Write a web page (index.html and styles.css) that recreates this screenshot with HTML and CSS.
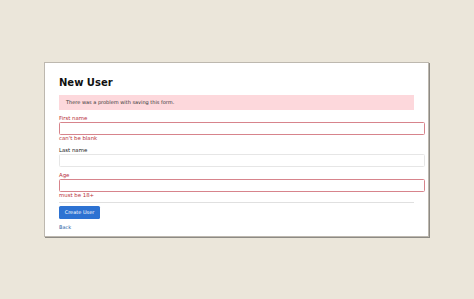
FILE: index.html
```html
<!DOCTYPE html>
<html>
<head>
<meta charset="utf-8">
<link rel="stylesheet" href="styles.css">
</head>
<body>
<div class="card">
  <h1 class="title">New User</h1>
  <div class="alert">There was a problem with saving this form.</div>
  <div class="field error">
    <label class="label">First name</label>
    <div class="input"></div>
    <div class="msg">can't be blank</div>
  </div>
  <div class="field">
    <label class="label">Last name</label>
    <div class="input"></div>
  </div>
  <div class="field error">
    <label class="label">Age</label>
    <div class="input"></div>
    <div class="msg">must be 18+</div>
  </div>
  <div class="rule"></div>
  <div class="btn">Create User</div>
  <a class="back" href="#">Back</a>
</div>
</body>
</html>
```
FILE: styles.css
```css
html, body { margin: 0; padding: 0; }
body {
  background: #ebe6da;
  width: 474px;
  height: 299px;
  overflow: hidden;
  font-family: "DejaVu Sans", Verdana, sans-serif;
  color: #222;
}
.card {
  box-sizing: border-box;
  margin: 62px 0 0 44px;
  width: 385px;
  height: 175px;
  background: #fff;
  border: 1px solid #bdb8af;
  box-shadow: 1px 1px 0 #8d8a84;
  padding: 10px 5px 0 14px;
}
.title {
  margin: 0;
  font-size: 10px;
  line-height: 20px;
  font-weight: bold;
  color: #111;
}
.alert {
  margin-top: 2px;
  width: 355px;
  box-sizing: border-box;
  height: 15px;
  background: #fdd8dc;
  padding: 0 7px;
  font-size: 5px;
  line-height: 15px;
  color: #333;
}
.field { margin-top: 5px; }
.label {
  display: block;
  font-size: 5.4px;
  line-height: 6px;
  color: #1a1a1a;
}
.input {
  margin-top: 1px;
  box-sizing: border-box;
  width: 366px;
  height: 13px;
  border: 1px solid #e6e6e6;
  border-radius: 1.5px;
  background: #fff;
}
.error .label, .error .msg { color: #b8323c; }
.error .input { border-color: #d7848c; }
.msg {
  font-size: 5.4px;
  line-height: 7px;
}
.rule {
  margin-top: 3px;
  width: 355px;
  height: 1px;
  background: #e0e0e0;
}
.btn {
  margin-top: 3px;
  width: 41px;
  height: 13px;
  background: #2d72d2;
  border-radius: 1.5px;
  color: #fff;
  font-size: 5px;
  line-height: 13px;
  text-align: center;
}
.back {
  display: block;
  margin-top: 5px;
  font-size: 5px;
  line-height: 7px;
  color: #2b5fa6;
  text-decoration: none;
}
```
